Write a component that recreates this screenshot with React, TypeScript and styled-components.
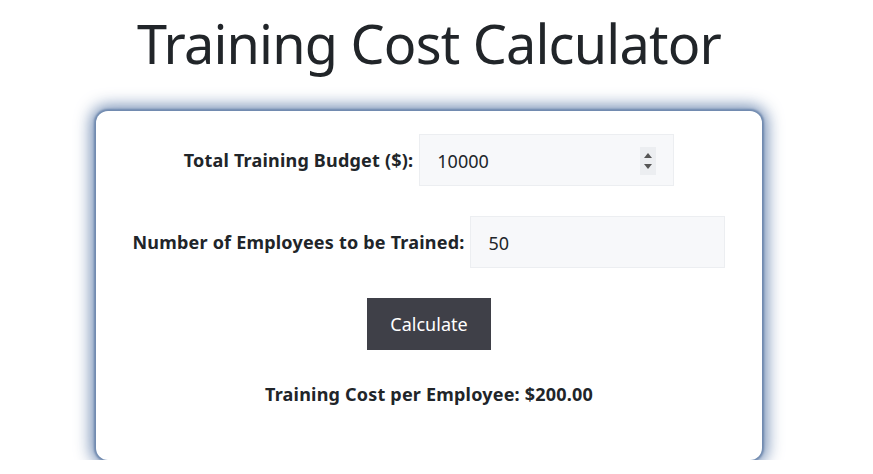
import React, { useState } from "react";
import styled, { createGlobalStyle } from "styled-components";

const GlobalStyle = createGlobalStyle`
  body {
    margin: 0;
    background: #ffffff;
    font-family: "Noto Sans", "Open Sans", sans-serif;
    color: #212529;
  }
`;

const Page = styled.div`
  width: 858px;
  display: flex;
  flex-direction: column;
  align-items: center;
`;

const Title = styled.h1`
  margin: 6px 0 0;
  font-size: 54px;
  font-weight: 400;
  letter-spacing: -0.8px;
  line-height: 74px;
  color: #212529;
`;

const Card = styled.div`
  margin-top: 31px;
  width: 666px;
  height: 349px;
  box-sizing: border-box;
  padding-top: 23px;
  background: #ffffff;
  border-radius: 12px;
  box-shadow: 0 0 2px 2px rgba(112, 138, 175, 1),
    0 0 16px 5px rgba(95, 125, 170, 0.9);
  display: flex;
  flex-direction: column;
  align-items: center;
`;

const Row = styled.div`
  display: flex;
  align-items: center;
  gap: 6px;
  margin-bottom: 30px;
`;

const Label = styled.label`
  font-size: 18px;
  font-weight: 700;
  letter-spacing: 0.2px;
  color: #212529;
`;

const Field = styled.div`
  width: 255px;
  height: 52px;
  box-sizing: border-box;
  background: #f7f8fa;
  border: 1px solid #eceef1;
  display: flex;
  align-items: center;
  padding: 2px 17px 0 17px;
`;

const Input = styled.input`
  flex: 1;
  min-width: 0;
  border: none;
  outline: none;
  background: transparent;
  font-family: inherit;
  font-size: 18px;
  color: #212529;
  padding: 0;
  -moz-appearance: textfield;
  &::-webkit-inner-spin-button,
  &::-webkit-outer-spin-button {
    -webkit-appearance: none;
    margin: 0;
  }
`;

const Spinner = styled.div`
  width: 16px;
  height: 28px;
  background: #eceef1;
  display: flex;
  flex-direction: column;
  align-items: center;
  justify-content: space-around;
  padding: 3px 0;
  box-sizing: border-box;
`;

const Button = styled.button`
  width: 124px;
  height: 52px;
  border: none;
  background: #3f4048;
  color: #ffffff;
  font-family: inherit;
  font-size: 18px;
  cursor: pointer;
`;

const Result = styled.p`
  margin: 32px 0 0;
  font-size: 18px;
  font-weight: 700;
  letter-spacing: 0.2px;
  color: #212529;
`;

const Arrow = ({ up }: { up?: boolean }) => (
  <svg width="8" height="5" viewBox="0 0 8 5">
    <path d={up ? "M0 5 L4 0 L8 5 Z" : "M0 0 L4 5 L8 0 Z"} fill="#555" />
  </svg>
);

export default function App() {
  const [budget, setBudget] = useState("10000");
  const [employees, setEmployees] = useState("50");
  const [cost, setCost] = useState(200);

  const calculate = () => {
    const b = parseFloat(budget);
    const e = parseFloat(employees);
    if (e > 0) setCost(b / e);
  };

  return (
    <Page>
      <GlobalStyle />
      <Title>Training Cost Calculator</Title>
      <Card>
        <Row>
          <Label>Total Training Budget ($):</Label>
          <Field>
            <Input
              type="number"
              value={budget}
              onChange={(e) => setBudget(e.target.value)}
            />
            <Spinner>
              <Arrow up />
              <Arrow />
            </Spinner>
          </Field>
        </Row>
        <Row>
          <Label>Number of Employees to be Trained:</Label>
          <Field>
            <Input
              type="text"
              value={employees}
              onChange={(e) => setEmployees(e.target.value)}
            />
          </Field>
        </Row>
        <Button onClick={calculate}>Calculate</Button>
        <Result>Training Cost per Employee: ${cost.toFixed(2)}</Result>
      </Card>
    </Page>
  );
}
